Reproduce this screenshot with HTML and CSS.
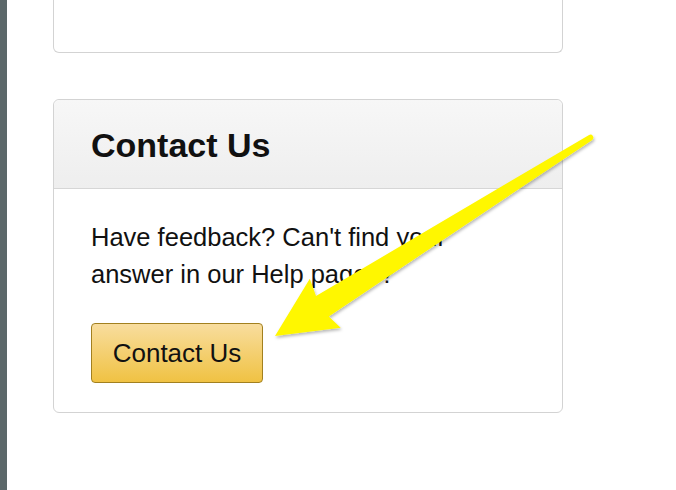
FILE: index.html
```html
<!DOCTYPE html>
<html lang="en">
<head>
<meta charset="utf-8">
<title>Contact Us</title>
<link rel="stylesheet" href="styles.css">
</head>
<body>
<div class="page">
  <div class="sidebar"></div>
  <main class="main">
    <div class="card card-top"></div>
    <section class="card card-contact">
      <header class="card-head">
        <h2 class="card-title">Contact Us</h2>
      </header>
      <div class="card-body">
        <p class="card-text">Have feedback? Can't find your answer in our Help pages?</p>
        <button class="btn-contact" type="button">Contact Us</button>
      </div>
    </section>
  </main>
  <svg class="arrow" width="676" height="490" viewBox="0 0 676 490" aria-hidden="true">
    <defs>
      <filter id="shadow" x="-10%" y="-10%" width="130%" height="130%">
        <feDropShadow dx="1" dy="2" stdDeviation="1.5" flood-color="#000" flood-opacity="0.28"/>
      </filter>
    </defs>
    <path filter="url(#shadow)" fill="#fff700" d="M275 336 L309.8 278.7 L316 296 L589.1 134.9 A3 3 0 0 1 592.3 139.9 L328.8 316.4 L340.7 327.8 Z"/>
  </svg>
</div>
</body>
</html>
```

FILE: styles.css
```css
html, body {
  margin: 0;
  padding: 0;
  background: #ffffff;
}

.page {
  position: relative;
  display: flex;
  width: 676px;
  height: 490px;
  overflow: hidden;
  font-family: "Liberation Sans", Arial, sans-serif;
  color: #111111;
}

.sidebar {
  flex: 0 0 7px;
  background: #5c686a;
}

.main {
  display: flex;
  flex-direction: column;
  gap: 46px;
  padding-left: 46px;
}

.card {
  box-sizing: border-box;
  width: 510px;
  border: 1px solid #d3d3d3;
  border-radius: 6px;
  background: #ffffff;
}

.card-top {
  height: 53px;
  border-top: 0;
  border-radius: 0 0 6px 6px;
}

.card-head {
  padding: 25px 37px 23px;
  background: linear-gradient(#f7f7f7, #eeeeee);
  border-bottom: 1px solid #d6d6d6;
  border-radius: 6px 6px 0 0;
}

.card-title {
  margin: 0;
  font-size: 34px;
  line-height: 40px;
  font-weight: bold;
  color: #111111;
}

.card-body {
  padding: 30px 37px 29px;
}

.card-text {
  margin: 0;
  max-width: 390px;
  font-size: 25.5px;
  line-height: 36.5px;
}

.btn-contact {
  display: block;
  box-sizing: border-box;
  margin-top: 31px;
  width: 172px;
  height: 60px;
  padding: 0;
  border: 1px solid #a2801f;
  border-radius: 4px;
  background: linear-gradient(#f8dd9e, #f0c243);
  font-family: "Liberation Sans", Arial, sans-serif;
  font-size: 26px;
  line-height: 58px;
  color: #111111;
  text-align: center;
}

.arrow {
  position: absolute;
  left: 0;
  top: 0;
  pointer-events: none;
}
```
